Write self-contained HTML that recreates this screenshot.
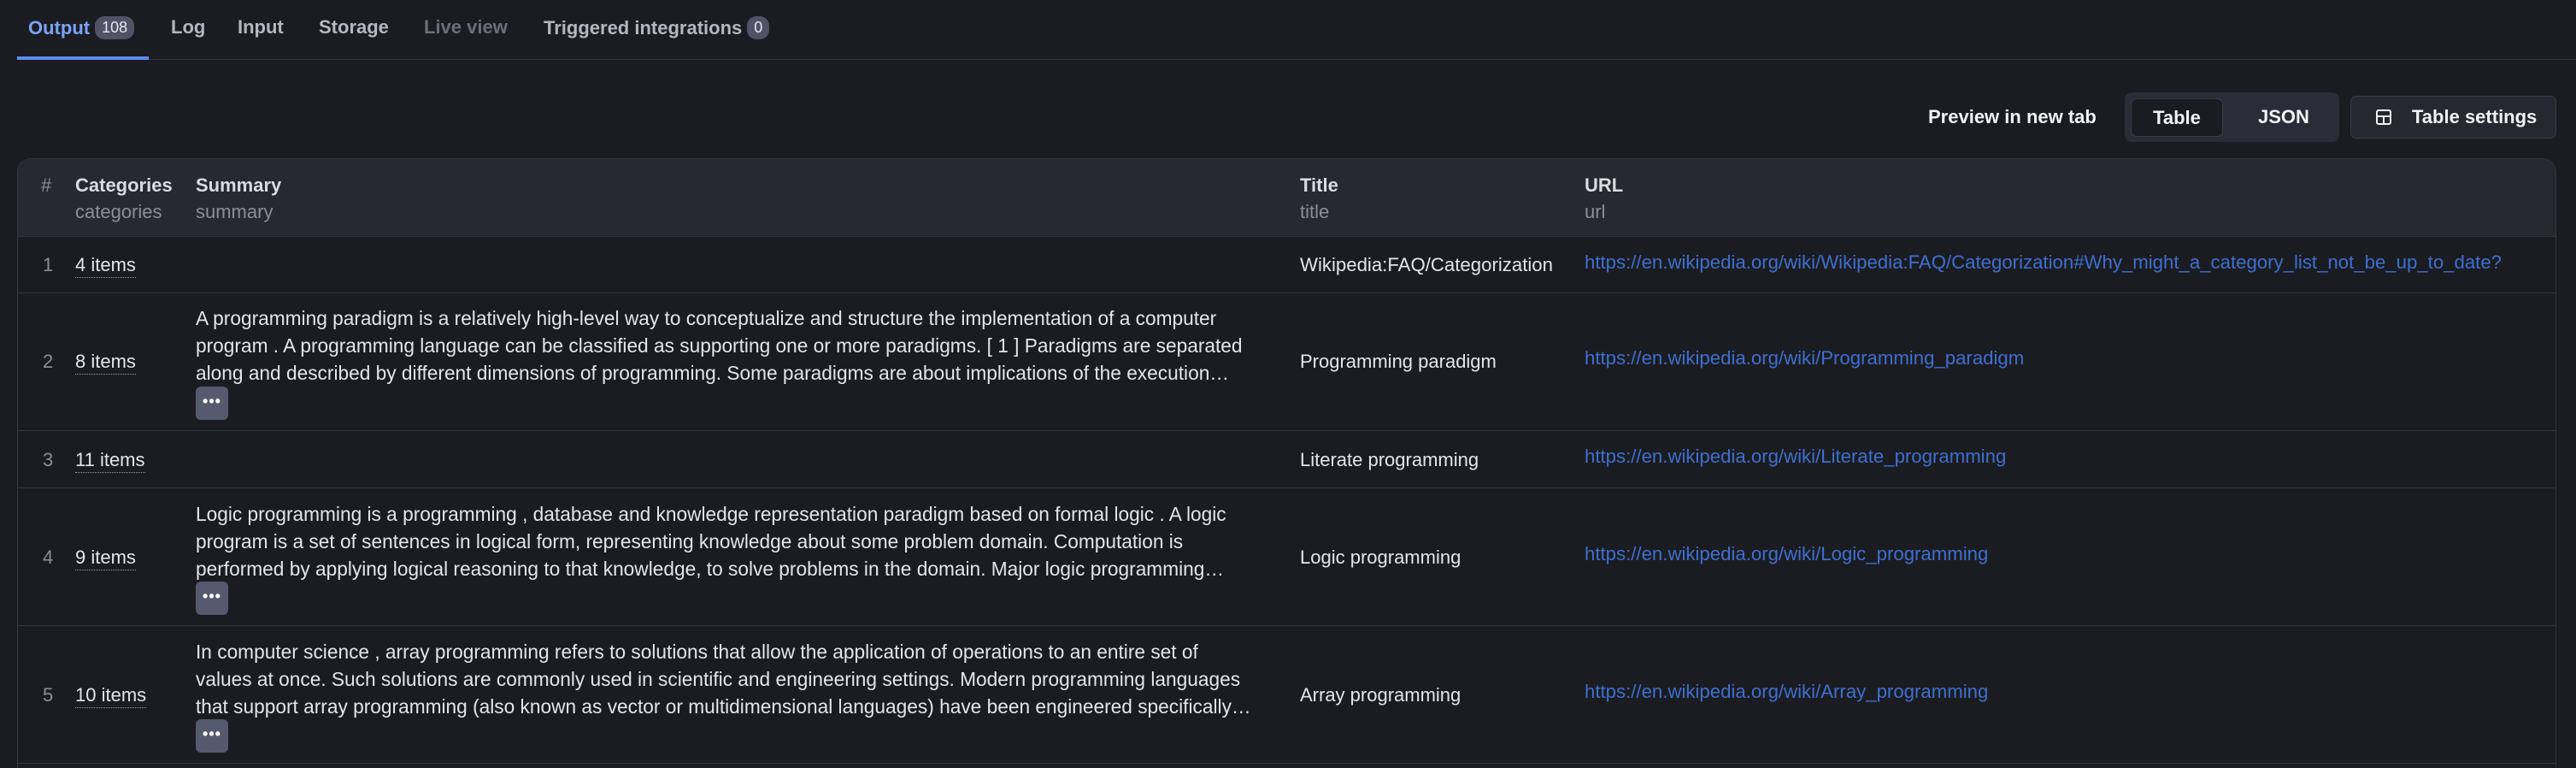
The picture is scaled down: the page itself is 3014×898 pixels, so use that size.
<!DOCTYPE html>
<html><head><meta charset="utf-8"><style>
*{margin:0;padding:0;box-sizing:border-box}
body{width:3014px;height:898px;background:#1b1c21;font-family:"Liberation Sans",sans-serif;color:#e4e5ea;position:relative;overflow:hidden;font-size:22px}
.a{position:absolute;white-space:nowrap}
.tab{position:absolute;top:19px;font-weight:bold;font-size:22px;color:#b4b7c2}
.badge{display:inline-block;background:#4f5366;color:#e4e5ea;border-radius:11px;font-size:18px;font-weight:normal;padding:3px 8px;vertical-align:2px;margin-left:6px}
.hl{position:absolute;left:20px;width:2971px;height:1px;background:#32343f}
.num{color:#8b8e99}
.items{border-bottom:1px dotted #9a9caa;padding-bottom:2px}
.link{color:#3e6fcf;font-size:22.2px}
.dots{position:absolute;left:229px;width:38px;height:39px;background:#555a6e;border-radius:6px;color:#fff;font-size:18px;text-align:center;line-height:34px;letter-spacing:1px;font-weight:bold}
.sum{position:absolute;left:229px;line-height:32px;white-space:nowrap;font-size:22.7px}
</style></head><body>
<div class="tab" style="left:33px;color:#7aa3f5">Output<span class="badge">108</span></div>
<div class="tab" style="left:200px">Log</div>
<div class="tab" style="left:278px">Input</div>
<div class="tab" style="left:373px">Storage</div>
<div class="tab" style="left:496px;color:#6b6e7b">Live view</div>
<div class="tab" style="left:636px">Triggered integrations<span class="badge">0</span></div>
<div class="a" style="left:20px;top:69px;width:2994px;height:1px;background:#32343f"></div>
<div class="a" style="left:20px;top:66px;width:154px;height:4px;background:#5b8cf0"></div>

<div class="a" style="left:2256px;top:124px;font-weight:bold;color:#f2f3f6">Preview in new tab</div>
<div class="a" style="left:2486px;top:108px;width:251px;height:58px;background:#2a2c37;border-radius:8px"></div>
<div class="a" style="left:2493px;top:115px;width:108px;height:45px;background:#1b1c21;border:1px solid #3a3d4a;border-radius:7px;text-align:center;line-height:43px;font-weight:bold;color:#f2f3f6">Table</div>
<div class="a" style="left:2642px;top:124px;font-weight:bold;color:#f2f3f6">JSON</div>
<div class="a" style="left:2750px;top:112px;width:241px;height:50px;background:#252731;border:1px solid #3a3d4a;border-radius:7px"></div>
<svg class="a" style="left:2779px;top:127px" width="20" height="20" viewBox="0 0 20 20" fill="none" stroke="#f2f3f6" stroke-width="2"><rect x="2" y="2" width="16" height="16" rx="2"/><path d="M2 9h16M10 9v9"/></svg>
<div class="a" style="left:2822px;top:124px;font-weight:bold;color:#f2f3f6">Table settings</div>

<div class="a" style="left:20px;top:185px;width:2971px;height:713px;border:1px solid #32343f;border-bottom:none;border-radius:16px 16px 0 0;overflow:hidden">
<div style="height:91px;background:#262832"></div></div>
<div class="a" style="left:48px;top:204px;color:#8b8e99">#</div>
<div class="a" style="left:88px;top:204px;font-weight:bold;color:#d9dbe2">Categories</div>
<div class="a" style="left:88px;top:235px;color:#8b8e99">categories</div>
<div class="a" style="left:229px;top:204px;font-weight:bold;color:#d9dbe2">Summary</div>
<div class="a" style="left:229px;top:235px;color:#8b8e99">summary</div>
<div class="a" style="left:1521px;top:204px;font-weight:bold;color:#d9dbe2">Title</div>
<div class="a" style="left:1521px;top:235px;color:#8b8e99">title</div>
<div class="a" style="left:1854px;top:204px;font-weight:bold;color:#d9dbe2">URL</div>
<div class="a" style="left:1854px;top:235px;color:#8b8e99">url</div>

<div class="hl" style="top:276px"></div>
<div class="hl" style="top:342px"></div>
<div class="hl" style="top:503px"></div>
<div class="hl" style="top:570px"></div>
<div class="hl" style="top:731px"></div>
<div class="hl" style="top:892px"></div>

<div class="a num" style="left:50px;top:297px">1</div>
<div class="a" style="left:88px;top:297px"><span class="items">4 items</span></div>
<div class="a" style="left:1521px;top:297px;font-size:22.2px">Wikipedia:FAQ/Categorization</div>
<div class="a link" style="left:1854px;top:294px">https://en.wikipedia.org/wiki/Wikipedia:FAQ/Categorization#Why_might_a_category_list_not_be_up_to_date?</div>

<div class="a num" style="left:50px;top:410px">2</div>
<div class="a" style="left:88px;top:410px"><span class="items">8 items</span></div>
<div class="sum" style="top:356px">A programming paradigm is a relatively high-level way to conceptualize and structure the implementation of a computer<br>program . A programming language can be classified as supporting one or more paradigms. [ 1 ] Paradigms are separated<br>along and described by different dimensions of programming. Some paradigms are about implications of the execution…</div>
<div class="dots" style="top:452px">•••</div>
<div class="a" style="left:1521px;top:410px">Programming paradigm</div>
<div class="a link" style="left:1854px;top:406px">https://en.wikipedia.org/wiki/Programming_paradigm</div>

<div class="a num" style="left:50px;top:525px">3</div>
<div class="a" style="left:88px;top:525px"><span class="items">11 items</span></div>
<div class="a" style="left:1521px;top:525px">Literate programming</div>
<div class="a link" style="left:1854px;top:521px">https://en.wikipedia.org/wiki/Literate_programming</div>

<div class="a num" style="left:50px;top:639px">4</div>
<div class="a" style="left:88px;top:639px"><span class="items">9 items</span></div>
<div class="sum" style="top:585px">Logic programming is a programming , database and knowledge representation paradigm based on formal logic . A logic<br>program is a set of sentences in logical form, representing knowledge about some problem domain. Computation is<br>performed by applying logical reasoning to that knowledge, to solve problems in the domain. Major logic programming…</div>
<div class="dots" style="top:680px">•••</div>
<div class="a" style="left:1521px;top:639px">Logic programming</div>
<div class="a link" style="left:1854px;top:635px">https://en.wikipedia.org/wiki/Logic_programming</div>

<div class="a num" style="left:50px;top:800px">5</div>
<div class="a" style="left:88px;top:800px"><span class="items">10 items</span></div>
<div class="sum" style="top:746px">In computer science , array programming refers to solutions that allow the application of operations to an entire set of<br>values at once. Such solutions are commonly used in scientific and engineering settings. Modern programming languages<br>that support array programming (also known as vector or multidimensional languages) have been engineered specifically…</div>
<div class="dots" style="top:841px">•••</div>
<div class="a" style="left:1521px;top:800px">Array programming</div>
<div class="a link" style="left:1854px;top:796px">https://en.wikipedia.org/wiki/Array_programming</div>
</body></html>
